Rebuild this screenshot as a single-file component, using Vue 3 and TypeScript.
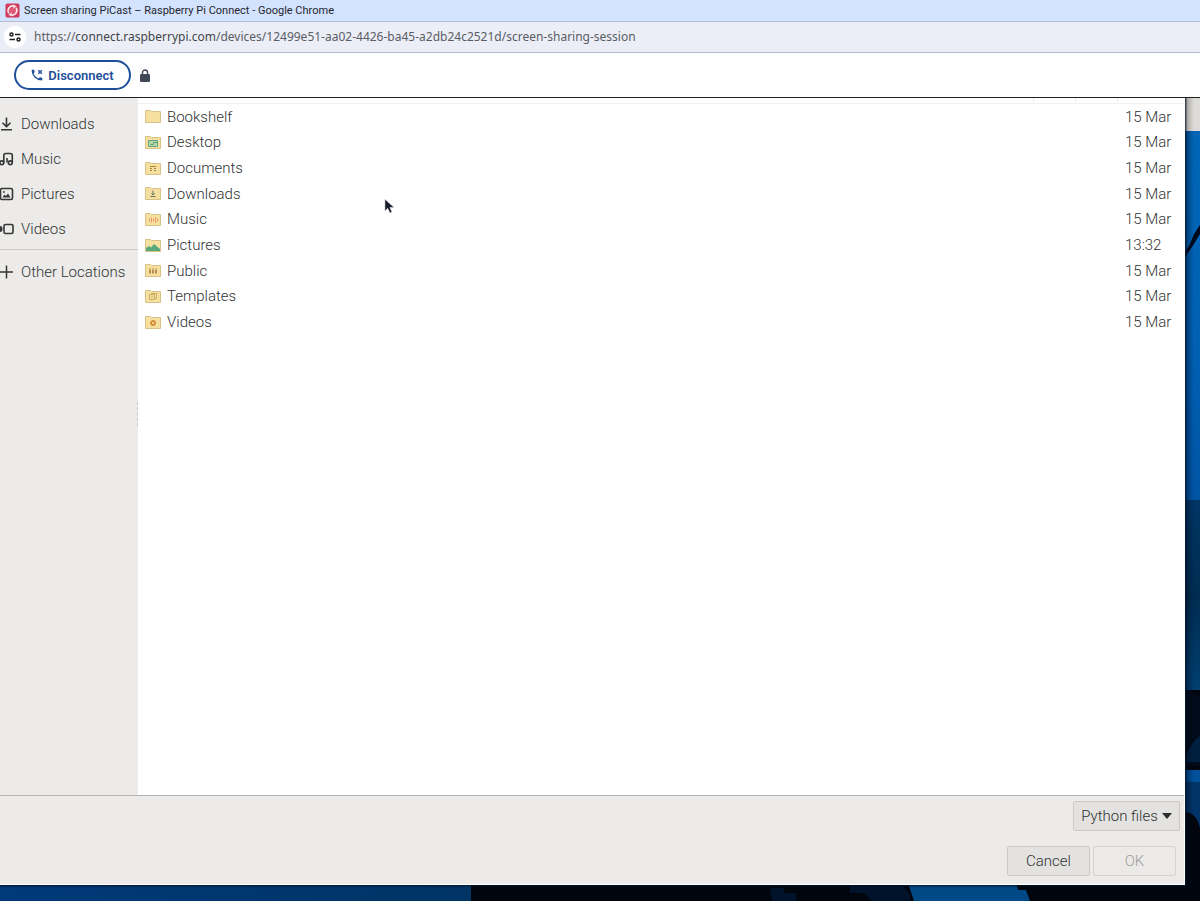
<script setup lang="ts">
interface Entry {
  name: string
  date: string
}

const places: string[] = ['Downloads', 'Music', 'Pictures', 'Videos']

const entries: Entry[] = [
  { name: 'Bookshelf', date: '15 Mar' },
  { name: 'Desktop', date: '15 Mar' },
  { name: 'Documents', date: '15 Mar' },
  { name: 'Downloads', date: '15 Mar' },
  { name: 'Music', date: '15 Mar' },
  { name: 'Pictures', date: '13:32' },
  { name: 'Public', date: '15 Mar' },
  { name: 'Templates', date: '15 Mar' },
  { name: 'Videos', date: '15 Mar' },
]
</script>

<template>
  <div class="window">
    <header class="titlebar">
      <svg class="favicon" viewBox="0 0 16 16" aria-hidden="true">
        <rect x="0.5" y="0.5" width="15" height="15" rx="2" fill="#d23c5c" />
        <circle cx="8" cy="8" r="3.200" fill="#dd5a76" />
        <path d="M4.200 11A5 5 0 0 1 9.500 3.300M11.800 5A5 5 0 0 1 6.500 12.700" fill="none" stroke="#fbe3e9" stroke-width="1.700" />
        <path d="M8.500 1.500l4 2-3.500 2.500zM7.500 14.500l-4-2L7 10z" fill="#fbe3e9" />
      </svg>
      <span>Screen sharing PiCast – Raspberry Pi Connect - Google Chrome</span>
    </header>

    <div class="addressbar">
      <button class="site-info" type="button" aria-label="View site information">
        <svg viewBox="0 0 12 12" fill="none" stroke="#1f1f1f" stroke-width="1.500" aria-hidden="true">
          <circle cx="2.500" cy="3.500" r="1.500" />
          <path d="M6 3.500h5.500M0.500 8.500H6" />
          <circle cx="9.500" cy="8.500" r="1.500" />
        </svg>
      </button>
      <span class="url">https://<b>connect.raspberrypi.com</b>/devices/12499e51-aa02-4426-ba45-a2db24c2521d/screen-sharing-session</span>
    </div>

    <div class="toolbar">
      <button class="disconnect" type="button">
        <svg viewBox="0 0 12 12" fill="none" stroke="#1f4f9a" aria-hidden="true">
          <path d="M1.300 1.200C1.300 6.500 5.500 10.700 10.800 10.700" stroke-width="1.400" />
          <path d="M0.700 0.700h2.500l.5 2.600-1.800 1.500zM11.300 11.300V8.800l-2.600-.5-1.500 1.800z" fill="#1f4f9a" stroke="none" />
          <path d="M7.300 1.200l3.600 3.600M10.900 1.200L7.300 4.800" stroke-width="1.400" />
        </svg>
        Disconnect
      </button>
      <svg class="lock" viewBox="0 0 10 13" aria-hidden="true">
        <path d="M2.500 6V3.500a2.500 2.500 0 0 1 5 0V6" fill="none" stroke="#414958" stroke-width="1.400" />
        <rect y="5" width="10" height="8" rx="1.200" fill="#414958" />
      </svg>
    </div>

    <main class="remote">
      <svg class="wallpaper" viewBox="0 0 1200 803" preserveAspectRatio="none" aria-hidden="true">
        <defs>
          <linearGradient id="sky" x1="0" y1="0" x2="0" y2="1">
            <stop offset="0" stop-color="#0065b6" />
            <stop offset="0.600" stop-color="#0060b4" />
            <stop offset="1" stop-color="#0054a4" />
          </linearGradient>
          <linearGradient id="sea" x1="0" y1="0" x2="0" y2="1">
            <stop offset="0" stop-color="#003565" />
            <stop offset="0.500" stop-color="#002c50" />
            <stop offset="1" stop-color="#003f70" />
          </linearGradient>
          <linearGradient id="panelShade" x1="0" y1="0" x2="1" y2="0">
            <stop offset="0.200" stop-color="#9c9a98" />
            <stop offset="0.700" stop-color="#dddbd8" />
          </linearGradient>
          <linearGradient id="edgeShade" x1="0" y1="0" x2="1" y2="0">
            <stop offset="0.200" stop-color="#000a1c" stop-opacity="0.500" />
            <stop offset="0.700" stop-color="#000a1c" stop-opacity="0" />
          </linearGradient>
          <linearGradient id="shore" x1="0" y1="0" x2="1" y2="0">
            <stop offset="0" stop-color="#003a79" />
            <stop offset="1" stop-color="#003465" />
          </linearGradient>
        </defs>
        <rect width="1200" height="803" fill="#00050e" />
        <rect x="1180" width="20" height="33" fill="url(#panelShade)" />
        <rect x="1180" y="33" width="20" height="369" fill="url(#sky)" />
        <path d="M1180 160l9-12 5-12 6-9v9l-8 13-12 17z" fill="#00091d" />
        <rect x="1180" y="402" width="20" height="190" fill="url(#sea)" />
        <path d="M1180 592q14 0 20 6v70h-20z" fill="#000a18" />
        <path d="M1200 638q-10 6-16 26h16z" fill="#001f3f" />
        <rect x="1180" y="672" width="20" height="12" fill="#00509a" />
        <path d="M1180 684h20v46q-4-18-20-16z" fill="#003468" />
        <rect x="1180" y="33" width="20" height="755" fill="url(#edgeShade)" />
        <rect y="785" width="471" height="18" fill="url(#shore)" />
        <path d="M770 790h14v5h12v8h-24zM850 788h52l8 8v7h-38l-8-8h-14z" fill="#00132a" />
        <path d="M908 785h108l2 7h8l4 11H914z" fill="#004986" />
      </svg>

      <section class="dialog" aria-label="Open file">
        <div class="browser">
          <nav class="places" aria-label="Places">
            <a v-for="place in places" :key="place" class="place" href="#">
              <svg viewBox="0 0 14 14" fill="none" stroke="#333735" stroke-width="1.600" aria-hidden="true">
                <path v-if="place === 'Downloads'" d="M6.500 0.500v9M2.500 5.700l4 4 4-4M1 12.800h11" />
                <template v-else-if="place === 'Music'">
                  <circle cx="1.800" cy="10.800" r="1.900" />
                  <circle cx="10.300" cy="10.800" r="1.900" />
                  <path d="M3.800 10.800V3.500q0-2 2-2h4.500q2 0 2 2v7.300M7 10.500V6" />
                </template>
                <template v-else-if="place === 'Pictures'">
                  <rect x="0.500" y="1.500" width="12" height="11" rx="1.500" />
                  <path d="M2.500 10.500l2-3L6 9l2-2.500 2.500 4z" fill="#333735" stroke="none" />
                  <circle cx="4" cy="5" r="0.900" fill="#333735" stroke="none" />
                </template>
                <template v-else>
                  <rect x="4" y="2.500" width="9" height="9" rx="1.500" />
                  <path d="M0 4q2.500 0 2.500 3t-2.500 3z" fill="#333735" stroke="none" />
                </template>
              </svg>
              {{ place }}
            </a>
            <a class="place other" href="#">
              <svg viewBox="0 0 14 14" fill="none" stroke="#333735" stroke-width="1.500" aria-hidden="true">
                <path d="M6.500 0.500v13M0 7h13" />
              </svg>
              Other Locations
            </a>
          </nav>

          <div class="files">
            <div class="column-heads" aria-hidden="true"><i></i><i></i><i></i></div>
            <table>
              <tbody>
                <tr v-for="entry in entries" :key="entry.name">
                  <td class="name">
                    <div class="cell">
                      <svg viewBox="0 0 16 13" aria-hidden="true">
                        <path d="M0.500 0.500h5l1 1h9v11h-15z" fill="#f5e0a0" stroke="#d8c288" />
                        <path v-if="entry.name === 'Desktop'" d="M3.500 4.500h9v6h-9zM5.500 8.500h3v-2h4" fill="#b8d6a0" stroke="#5ca78a" />
                        <path v-else-if="entry.name === 'Documents'" d="M5 4.500h6M5 6.500h2M9 6.500h2M5 8.500h2M9 8.500h2" fill="none" stroke="#ad843b" />
                        <path v-else-if="entry.name === 'Downloads'" d="M8 3.500v4M6.500 6.500L8 8l1.500-1.500M5.500 9.500h5" fill="none" stroke="#66705b" />
                        <path v-else-if="entry.name === 'Music'" d="M4.500 5.500v3M6.500 4.500v5M8.500 5.500v3M10.500 4v6M12.500 5.500v3" fill="none" stroke="#e89a74" />
                        <path v-else-if="entry.name === 'Pictures'" d="M1 12V9l3-2 2 1.500L9 5l6 5v2z" fill="#5aa97c" />
                        <path v-else-if="entry.name === 'Public'" d="M5 4.500v1M8 4.500v1M11 4.500v1M5 6v3.500M8 6v3.500M11 6v3.500" fill="none" stroke="#a57c3e" stroke-width="1.600" />
                        <path v-else-if="entry.name === 'Templates'" d="M4.500 4.500h5v5h-5zM6.500 4.500v-1h5v5h-2M6 7h2" fill="none" stroke="#c9ad5e" />
                        <circle v-else-if="entry.name === 'Videos'" cx="8" cy="7" r="2" fill="#f5e0a0" stroke="#d68b34" stroke-width="1.800" />
                      </svg>
                      {{ entry.name }}
                    </div>
                  </td>
                  <td class="date">{{ entry.date }}</td>
                </tr>
              </tbody>
            </table>
            <div class="grip"></div>
          </div>
        </div>

        <footer class="actions">
          <button class="filter" type="button" aria-haspopup="listbox">
            Python files
            <svg viewBox="0 0 10 6" aria-hidden="true"><path d="M0 0h10L5 6z" fill="#2b2f2e" /></svg>
          </button>
          <div class="buttons">
            <button type="button">Cancel</button>
            <button type="button" disabled>OK</button>
          </div>
        </footer>
      </section>

      <svg class="pointer" viewBox="0 0 12 18" aria-hidden="true">
        <path d="M1 1v13l3-3 2.500 5 2.200-1L6.500 10H11z" fill="#171c2b" stroke="#e9e9f0" stroke-width="0.600" />
      </svg>
    </main>
  </div>
</template>

<style>
body {
  margin: 0;
}
</style>

<style scoped>
* {
  box-sizing: border-box;
}

.window {
  display: flex;
  flex-direction: column;
  min-height: 100vh;
  background: #fff;
  color: #303432;
  font-family: Roboto, "Liberation Sans", sans-serif;
}

button {
  margin: 0;
  font: inherit;
  color: inherit;
}

.titlebar {
  display: flex;
  align-items: center;
  gap: 4px;
  height: 22px;
  padding-left: 5px;
  border-bottom: 1px solid #b3bdd0;
  background: #d3e2fd;
  color: #24272e;
  font-size: 11px;
  line-height: 16px;
  white-space: nowrap;
}

.favicon {
  width: 15px;
  height: 15px;
}

.addressbar {
  display: flex;
  align-items: center;
  gap: 8px;
  height: 31px;
  padding-left: 4px;
  border-bottom: 1px solid #b9bdc9;
  background: #ebeef7;
  color: #5a5d63;
  font-family: "Noto Sans", "Open Sans", sans-serif;
  font-size: 12px;
  line-height: 16px;
  white-space: nowrap;
}

.url b {
  color: #43464b;
  font-weight: 400;
}

.site-info {
  display: grid;
  place-items: center;
  width: 22px;
  height: 22px;
  padding: 0;
  border: 0;
  border-radius: 50%;
  background: #fff;
}

.site-info svg {
  width: 12px;
  height: 12px;
}

.toolbar {
  display: flex;
  align-items: center;
  gap: 9px;
  height: 45px;
  padding-left: 14px;
  border-bottom: 1px solid #1d1f20;
}

.disconnect {
  display: flex;
  align-items: center;
  justify-content: center;
  gap: 5px;
  width: 117px;
  height: 30px;
  padding: 0;
  border: 2px solid #1f4f9a;
  border-radius: 15px;
  background: #fff;
  color: #1f4f9a;
  font-size: 13px;
  font-weight: 600;
}

.disconnect svg {
  width: 12px;
  height: 12px;
}

.lock {
  width: 10px;
  height: 13px;
}

.remote {
  position: relative;
  display: flex;
  flex: 1;
  padding: 0 15px 16px 0;
  font-size: 15px;
  font-weight: 300;
}

.wallpaper {
  position: absolute;
  inset: 0;
  width: 100%;
  height: 100%;
}

.dialog {
  position: relative;
  display: flex;
  flex: 1;
  flex-direction: column;
  border-right: 1px solid #fff;
  border-bottom: 1px solid #fff;
  background: #ecebe9;
  box-shadow: 0 0 2px 1px #02142b;
  clip-path: inset(0 -4px -4px 0);
}

.browser {
  display: flex;
  flex: 1;
  border-bottom: 1px solid #b3b2b1;
}

.places {
  width: 138px;
  padding-top: 8px;
}

.place {
  display: flex;
  align-items: center;
  gap: 7px;
  height: 35px;
  color: inherit;
  text-decoration: none;
  white-space: nowrap;
}

.place svg {
  width: 14px;
  height: 14px;
}

.other {
  height: 44px;
  margin-top: 3px;
  border-top: 1px solid #cbcac8;
}

.files {
  position: relative;
  flex: 1;
  background: #fff;
}

.column-heads {
  display: flex;
  justify-content: flex-end;
  height: 6px;
  padding-right: 25px;
  border-bottom: 1px solid #f0f0f0;
}

.column-heads i {
  width: 42px;
  border-left: 1px solid #eee;
}

table {
  width: 100%;
  height: 231px;
  border-collapse: collapse;
}

td {
  padding: 0;
  line-height: 20px;
}

.date {
  width: 59px;
}

.cell {
  display: flex;
  align-items: center;
  gap: 6px;
  padding-left: 7px;
}

.cell svg {
  width: 16px;
  height: 13px;
}

.grip {
  position: absolute;
  top: 304px;
  left: -1px;
  height: 24px;
  border-left: 1px dashed #c9c9c9;
}

.actions {
  display: flex;
  flex-direction: column;
  align-items: flex-end;
  gap: 15px;
  height: 88px;
  padding: 5px 4px 0 0;
}

.actions button {
  height: 30px;
  padding: 0;
  border: 1px solid #cac9c7;
  border-radius: 2px;
  background: #e3e2e0;
}

.actions .filter {
  display: flex;
  align-items: center;
  justify-content: center;
  gap: 4px;
  width: 107px;
}

.filter svg {
  width: 10px;
  height: 6px;
}

.buttons {
  display: flex;
  gap: 3px;
  padding-right: 4px;
}

.buttons button {
  width: 83px;
}

.buttons button:disabled {
  border-color: #d4d3d1;
  background: #ebeae8;
  color: #9c9c9a;
}

.pointer {
  position: absolute;
  top: 100px;
  left: 384px;
  width: 11px;
  height: 17px;
}
</style>
